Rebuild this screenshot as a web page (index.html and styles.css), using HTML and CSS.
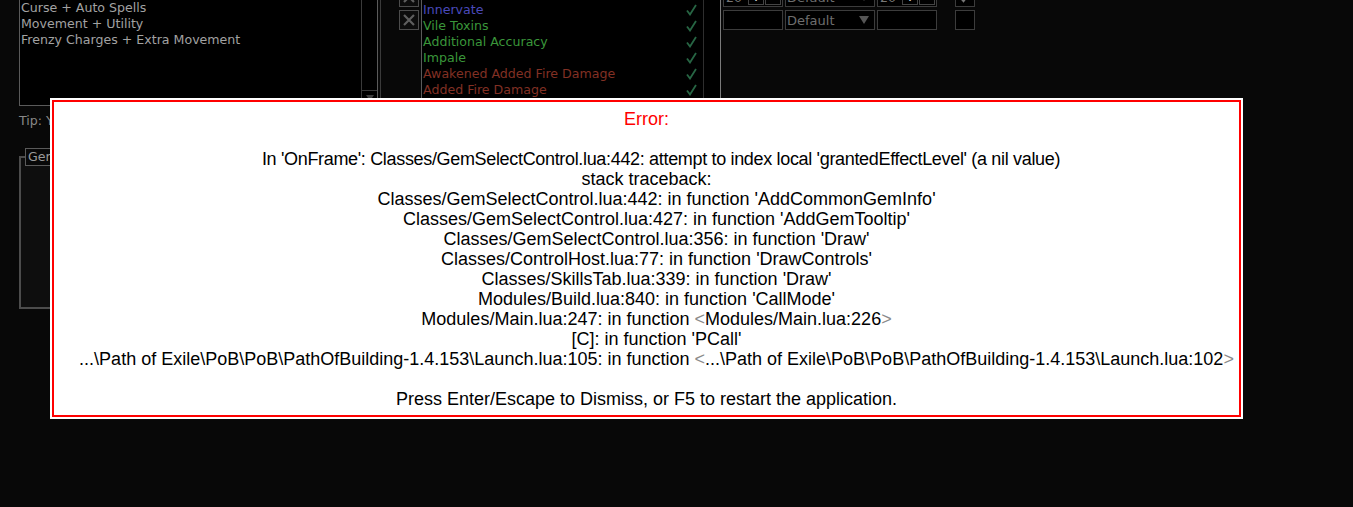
FILE: index.html
```html
<!DOCTYPE html>
<html>
<head>
<meta charset="utf-8">
<title>Path of Building</title>
<link rel="stylesheet" href="styles.css">
</head>
<body>
<div class="app">
  <div class="leftcol">
    <div class="setlist">
      <div class="setitems">
        <div class="item">Curse + Auto Spells</div>
        <div class="item">Movement + Utility</div>
        <div class="item">Frenzy Charges + Extra Movement</div>
      </div>
      <div class="vscroll">
        <div class="sbtrack"></div>
        <div class="sbbtn"><svg width="8" height="6" viewBox="0 0 8 6"><path d="M0 0H8L4 6Z" fill="#3e3e3e"/></svg></div>
      </div>
    </div>
    <div class="tip">Tip: You can select multiple items by holding Ctrl or Shift.</div>
    <div class="gemframe">
      <div class="legend">Gem Options</div>
    </div>
  </div>

  <div class="sep"></div>

  <div class="xcol">
    <div class="xbtn"><svg width="12" height="12" viewBox="0 0 12 12"><path d="M1 1L11 11M11 1L1 11" stroke="#5e5e5e" stroke-width="2.2"/></svg></div>
    <div class="xbtn"><svg width="12" height="12" viewBox="0 0 12 12"><path d="M1 1L11 11M11 1L1 11" stroke="#5e5e5e" stroke-width="2.2"/></svg></div>
  </div>

  <div class="dropdown">
    <div class="ddlist">
      <div class="ddrow int"><span>Innervate</span><svg class="chk" width="11" height="12" viewBox="0 0 11 12"><path d="M1 6.5L4 10.5L10 1" stroke="#276644" stroke-width="1.8" fill="none"/></svg></div>
      <div class="ddrow dex"><span>Vile Toxins</span><svg class="chk" width="11" height="12" viewBox="0 0 11 12"><path d="M1 6.5L4 10.5L10 1" stroke="#276644" stroke-width="1.8" fill="none"/></svg></div>
      <div class="ddrow dex"><span>Additional Accuracy</span><svg class="chk" width="11" height="12" viewBox="0 0 11 12"><path d="M1 6.5L4 10.5L10 1" stroke="#276644" stroke-width="1.8" fill="none"/></svg></div>
      <div class="ddrow dex"><span>Impale</span><svg class="chk" width="11" height="12" viewBox="0 0 11 12"><path d="M1 6.5L4 10.5L10 1" stroke="#276644" stroke-width="1.8" fill="none"/></svg></div>
      <div class="ddrow str"><span>Awakened Added Fire Damage</span><svg class="chk" width="11" height="12" viewBox="0 0 11 12"><path d="M1 6.5L4 10.5L10 1" stroke="#276644" stroke-width="1.8" fill="none"/></svg></div>
      <div class="ddrow str"><span>Added Fire Damage</span><svg class="chk" width="11" height="12" viewBox="0 0 11 12"><path d="M1 6.5L4 10.5L10 1" stroke="#276644" stroke-width="1.8" fill="none"/></svg></div>
      <div class="ddrow str"><span>Combustion</span><svg class="chk" width="11" height="12" viewBox="0 0 11 12"><path d="M1 6.5L4 10.5L10 1" stroke="#276644" stroke-width="1.8" fill="none"/></svg></div>
    </div>
    <div class="ddscroll"></div>
  </div>

  <div class="controls">
    <div class="crow">
      <div class="numbox"><span class="val">20</span><span class="spin">+</span><span class="spin">-</span></div>
      <div class="select"><span>Default</span><svg width="10" height="8" viewBox="0 0 10 8"><path d="M0 0H10L5 8Z" fill="#555"/></svg></div>
      <div class="numbox"><span class="val">20</span><span class="spin">+</span><span class="spin">-</span></div>
      <div class="cbox"><svg width="12" height="12" viewBox="0 0 12 12"><path d="M1 6L4.5 10L11 1" stroke="#777" stroke-width="2.2" fill="none"/></svg></div>
    </div>
    <div class="crow">
      <div class="numbox"></div>
      <div class="select"><span>Default</span><svg width="10" height="8" viewBox="0 0 10 8"><path d="M0 0H10L5 8Z" fill="#555"/></svg></div>
      <div class="numbox"></div>
      <div class="cbox"></div>
    </div>
  </div>
</div>

<div class="dialog">
  <div class="dialog-inner">
    <div class="err">Error:</div>
    <div class="blank"></div>
    <div class="ln first">In 'OnFrame': Classes/GemSelectControl.lua:442: attempt to index local 'grantedEffectLevel' (a nil value)</div>
    <div class="ln">stack traceback:</div>
    <div class="ln tb">Classes/GemSelectControl.lua:442: in function 'AddCommonGemInfo'</div>
    <div class="ln tb">Classes/GemSelectControl.lua:427: in function 'AddGemTooltip'</div>
    <div class="ln tb">Classes/GemSelectControl.lua:356: in function 'Draw'</div>
    <div class="ln tb">Classes/ControlHost.lua:77: in function 'DrawControls'</div>
    <div class="ln tb">Classes/SkillsTab.lua:339: in function 'Draw'</div>
    <div class="ln tb">Modules/Build.lua:840: in function 'CallMode'</div>
    <div class="ln tb">Modules/Main.lua:247: in function <span class="ang">&lt;</span>Modules/Main.lua:226<span class="ang">&gt;</span></div>
    <div class="ln tb">[C]: in function 'PCall'</div>
    <div class="ln tb">...\Path of Exile\PoB\PoB\PathOfBuilding-1.4.153\Launch.lua:105: in function <span class="ang">&lt;</span>...\Path of Exile\PoB\PoB\PathOfBuilding-1.4.153\Launch.lua:102<span class="ang">&gt;</span></div>
    <div class="blank"></div>
    <div class="ln">Press Enter/Escape to Dismiss, or F5 to restart the application.</div>
  </div>
</div>
</body>
</html>
```
FILE: styles.css
```css
html, body {
  margin: 0;
  padding: 0;
}
body {
  width: 1353px;
  height: 507px;
  overflow: hidden;
  position: relative;
  background: #080808;
  font-family: "DejaVu Sans", sans-serif;
  font-size: 12.6px;
}

.app {
  display: flex;
  align-items: flex-start;
  padding-left: 19px;
}

/* left column */
.leftcol {
  width: 359px;
  display: flex;
  flex-direction: column;
}
.setlist {
  margin-top: -1px;
  height: 107px;
  box-sizing: border-box;
  border: 1px solid #5a5a5a;
  background: #000;
  display: flex;
}
.setitems {
  flex: 1;
  padding-left: 1px;
  color: #a2a2a2;
  line-height: 16px;
}
.item {
  white-space: nowrap;
}
.vscroll {
  width: 15px;
  border-left: 1px solid #3a3a3a;
  display: flex;
  flex-direction: column;
}
.sbtrack {
  flex: 1;
}
.sbbtn {
  height: 14px;
  border-top: 1px solid #3a3a3a;
  display: flex;
  justify-content: center;
  align-items: center;
}
.tip {
  margin-top: 7px;
  line-height: 16px;
  color: #878787;
  white-space: nowrap;
}
.gemframe {
  margin-top: 27px;
  height: 153px;
  box-sizing: border-box;
  border: 2px solid #4c4c4c;
  background: #0e0e0e;
  display: flex;
  align-items: flex-start;
}
.legend {
  margin-top: -10px;
  margin-left: 4px;
  height: 16px;
  line-height: 16px;
  padding: 0 3px 0 2px;
  border: 1px solid #5a5a5a;
  background: #080808;
  color: #9a9a9a;
  white-space: nowrap;
}

/* separator and remove buttons */
.sep {
  margin-left: 2px;
  width: 1px;
  height: 320px;
  background: #3a3a3a;
}
.xcol {
  margin-top: -13px;
  margin-left: 18px;
  display: flex;
  flex-direction: column;
  gap: 3px;
}
.xbtn {
  width: 20px;
  height: 20px;
  box-sizing: border-box;
  border: 1px solid #4c4c4c;
  background: #0c0c0c;
  display: flex;
  align-items: center;
  justify-content: center;
}

/* gem dropdown */
.dropdown {
  margin-left: 2px;
  margin-top: -10px;
  width: 300px;
  height: 340px;
  box-sizing: border-box;
  border-left: 1px solid #5a5a5a;
  border-right: 1px solid #7a7a7a;
  background: #000;
  display: flex;
}
.ddlist {
  flex: 1;
  padding: 12px 6px 0 1px;
}
.ddrow {
  height: 16px;
  line-height: 16px;
  display: flex;
  justify-content: space-between;
  align-items: center;
  white-space: nowrap;
}
.ddrow.int { color: #4a4abb; }
.ddrow.dex { color: #3a963a; }
.ddrow.str { color: #823024; }
.chk {
  display: block;
}
.ddscroll {
  width: 16px;
  border-left: 1px solid #2e2e2e;
}

/* right controls */
.controls {
  margin-left: 2px;
  margin-top: -13px;
  display: flex;
  flex-direction: column;
  gap: 3px;
}
.crow {
  display: flex;
  gap: 2px;
  height: 20px;
}
.numbox {
  width: 60px;
  height: 20px;
  box-sizing: border-box;
  border: 1px solid #3c3c3c;
  background: #000;
  display: flex;
  align-items: center;
  color: #777;
}
.numbox .val {
  flex: 1;
  padding-left: 2px;
}
.spin {
  width: 16px;
  height: 16px;
  margin-right: 1px;
  border: 1px solid #444;
  box-sizing: border-box;
  color: #ccc;
  text-align: center;
  line-height: 14px;
  font-weight: bold;
}
.select {
  width: 90px;
  height: 20px;
  box-sizing: border-box;
  border: 1px solid #3c3c3c;
  background: #000;
  display: flex;
  align-items: center;
  justify-content: space-between;
  padding: 0 5px 0 1px;
  color: #6e6e6e;
  font-size: 13px;
}
.cbox {
  margin-left: 16px;
  width: 20px;
  height: 20px;
  box-sizing: border-box;
  border: 1px solid #3c3c3c;
  background: #000;
  display: flex;
  align-items: center;
  justify-content: center;
}

/* error dialog overlay */
.dialog {
  position: absolute;
  left: 50px;
  top: 98px;
  width: 1193px;
  height: 321px;
  box-sizing: border-box;
  background: #fff;
  padding: 2px;
}
.dialog-inner {
  height: 100%;
  box-sizing: border-box;
  border: 2px solid #ff0000;
  padding-top: 7px;
  text-align: center;
  font-family: "Liberation Sans", Arial, sans-serif;
  font-size: 18px;
  line-height: 20px;
  color: #000;
}
.err {
  color: #ff0000;
}
.blank {
  height: 20px;
}
.ln {
  white-space: nowrap;
}
.ln.first {
  padding-left: 29px;
  letter-spacing: -0.33px;
}
.ln.tb {
  padding-left: 20px;
}
.ang {
  color: #8a8a8a;
}
```
